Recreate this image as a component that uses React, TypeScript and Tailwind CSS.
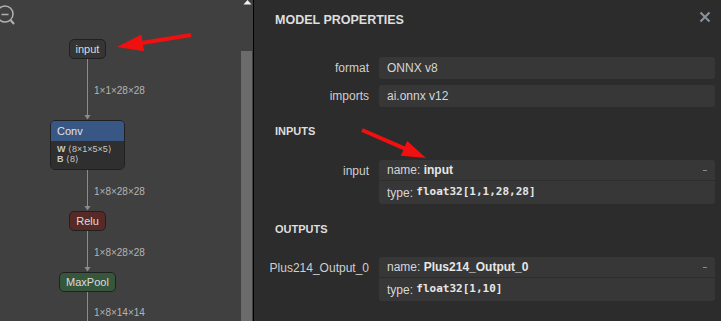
const sans = "font-['Liberation_Sans',Arial,sans-serif]"

function Edge({ h, label }: { h: number; label: string }) {
  return (
    <div className="relative flex flex-col items-center" style={{ height: h }}>
      <div className="w-px flex-1 bg-[#8c8c8c]" />
      <svg width="7" height="5" className="block">
        <path d="M0.5 0 L3.5 4.5 L6.5 0 Z" fill="#8c8c8c" />
      </svg>
      <div className="absolute left-[10px] top-1/2 -translate-y-1/2 whitespace-nowrap text-[10px] text-[#b4b4b4]">
        {label}
      </div>
    </div>
  )
}

function Node({ name, bg }: { name: string; bg: string }) {
  return (
    <div
      className={`h-[20px] px-[6px] flex items-center rounded-[5px] border border-[#202020] text-[11px] text-[#dcdcdc] ${bg}`}
    >
      {name}
    </div>
  )
}

function Graph() {
  return (
    <div className="relative w-[241px] h-full bg-[#404040] overflow-hidden">
      <svg className="absolute left-0 top-0" width="24" height="30">
        <circle cx="5" cy="14" r="8" fill="none" stroke="#b0b0b0" strokeWidth="1.5" />
        <line x1="1.5" y1="14.5" x2="8.5" y2="14.5" stroke="#b0b0b0" strokeWidth="1.5" />
        <line x1="10.5" y1="20" x2="14" y2="24" stroke="#b0b0b0" strokeWidth="2" />
      </svg>
      <div className="flex flex-col items-center w-[175px] pt-[39px]">
        <Node name="input" bg="bg-[#353535]" />
        <Edge h={61} label="1×1×28×28" />
        <div className="w-[75px] h-[50px] rounded-[5px] border border-[#202020] overflow-hidden flex flex-col">
          <div className="h-[20px] bg-[#395784] flex items-center px-[6px] text-[11px] text-[#e2e2e2]">
            Conv
          </div>
          <div className="flex-1 bg-[#2f2f2f] px-[6px] pt-[3px] text-[9px] leading-[10px] text-[#c8c8c8]">
            <div>
              <span className="font-bold">W</span> ⟨8×1×5×5⟩
            </div>
            <div>
              <span className="font-bold">B</span> ⟨8⟩
            </div>
          </div>
        </div>
        <Edge h={41} label="1×8×28×28" />
        <Node name="Relu" bg="bg-[#562a27]" />
        <Edge h={41} label="1×8×28×28" />
        <Node name="MaxPool" bg="bg-[#37573c]" />
        <Edge h={40} label="1×8×14×14" />
      </div>
    </div>
  )
}

function Scrollbar() {
  return (
    <div className="relative w-[12px] h-full bg-[#404040]">
      <svg className="absolute left-[2px] top-0" width="9" height="5">
        <path d="M4.5 0 L8.5 4.5 L0.5 4.5 Z" fill="#f2f2f2" />
      </svg>
      <div className="absolute left-0 top-[51px] bottom-0 w-[11px] bg-[#6b6b6b]" />
    </div>
  )
}

function Label({ children }: { children: React.ReactNode }) {
  return (
    <div className="w-[104px] shrink-0 pr-[10px] h-[22px] flex items-center justify-end whitespace-nowrap text-[12px] text-[#cfcfcf]">
      {children}
    </div>
  )
}

function Attr({ name, value }: { name: string; value: string }) {
  return (
    <div className="flex">
      <Label>{name}</Label>
      <div className="flex-1 h-[22px] rounded-[3px] bg-[#373737] px-[8px] flex items-center text-[12px] text-[#d6d6d6]">
        {value}
      </div>
    </div>
  )
}

function Arg({ name, type }: { name: string; type: string }) {
  return (
    <div className="flex">
      <Label>{name}</Label>
      <div className="flex-1 rounded-[3px] bg-[#373737] text-[12px] text-[#d6d6d6]">
        <div className="h-[21px] px-[8px] flex items-center justify-between border-b border-[#2e2e2e]">
          <div>
            name: <span className="font-bold text-[#e6e6e6]">{name}</span>
          </div>
          <div className="w-[4px] h-px bg-[#8a8a8a]" />
        </div>
        <div className="h-[23px] px-[8px] flex items-center">
          type:&nbsp;
          <span className="font-['DejaVu_Sans_Mono',monospace] font-bold text-[11px] text-[#e6e6e6]">
            {type}
          </span>
        </div>
      </div>
    </div>
  )
}

function Panel() {
  return (
    <div className="flex-1 h-full bg-[#2c2c2c] pl-[21px] pr-[6px]">
      <div className="h-[40px] flex items-center justify-between">
        <div className="text-[12.5px] font-bold text-[#dedede]">MODEL PROPERTIES</div>
        <svg width="12" height="12" className="mb-[6px] mr-[4px]">
          <path d="M1.5 1.5 L10.5 10.5 M10.5 1.5 L1.5 10.5" stroke="#8c93a0" strokeWidth="2" />
        </svg>
      </div>
      <div className="mt-[17px] flex flex-col gap-[6px]">
        <Attr name="format" value="ONNX v8" />
        <Attr name="imports" value="ai.onnx v12" />
      </div>
      <div className="mt-[15px] h-[18px] flex items-center text-[11px] font-bold text-[#dedede]">INPUTS</div>
      <div className="mt-[20px]">
        <Arg name="input" type="float32[1,1,28,28]" />
      </div>
      <div className="mt-[16px] h-[18px] flex items-center text-[11px] font-bold text-[#dedede]">OUTPUTS</div>
      <div className="mt-[19px]">
        <Arg name="Plus214_Output_0" type="float32[1,10]" />
      </div>
    </div>
  )
}

export default function App() {
  return (
    <div className={`relative w-[721px] h-[321px] flex overflow-hidden ${sans}`}>
      <Graph />
      <Scrollbar />
      <div className="w-px h-full bg-black" />
      <Panel />
      <svg className="absolute inset-0 pointer-events-none" width="721" height="321">
        <line x1="191" y1="35" x2="140" y2="43.3" stroke="#f01010" strokeWidth="4" />
        <polygon points="117,47 144.1,51.2 141.3,34.4" fill="#f01010" />
        <line x1="362" y1="130" x2="406" y2="149.2" stroke="#f01010" strokeWidth="4" />
        <polygon points="426,158 400.8,155.7 407.2,141.1" fill="#f01010" />
      </svg>
    </div>
  )
}
